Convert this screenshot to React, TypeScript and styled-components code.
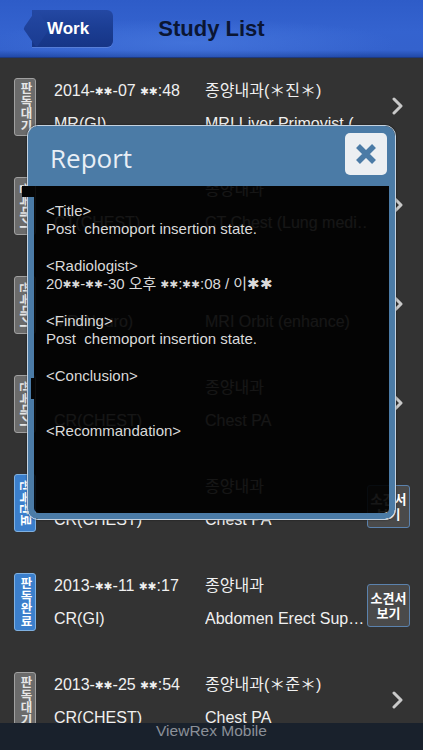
import styled, { createGlobalStyle } from 'styled-components';

const GlobalStyle = createGlobalStyle`
  html, body {
    margin: 0;
    padding: 0;
    background: #333333;
  }
  * {
    box-sizing: border-box;
  }
`;

const Screen = styled.div`
  position: relative;
  width: 423px;
  height: 750px;
  display: flex;
  flex-direction: column;
  background: #333333;
  overflow: hidden;
  font-family: "Liberation Sans", "Noto Sans CJK KR", Arial, sans-serif;
`;

const NavBar = styled.header`
  height: 58px;
  flex: none;
  display: grid;
  grid-template-columns: 1fr auto 1fr;
  align-items: center;
  background:
    radial-gradient(ellipse 70% 60% at 45% 75%, rgba(80, 130, 230, 0.5), rgba(80, 130, 230, 0) 70%),
    linear-gradient(#2e5cc8 0%, #3463cf 55%, #3462cd 88%, #2149a8 100%);
  border-bottom: 1px solid #1d3a80;
`;

const BackButton = styled.div`
  position: relative;
  justify-self: start;
  margin-left: 32px;
  width: 81px;
  height: 37px;
  display: flex;
  align-items: center;
  padding-left: 15px;
  border-radius: 0 6px 6px 0;
  background: linear-gradient(#2448a3, #1b3d93 50%, #163586);
  color: #ffffff;
  font-weight: bold;
  font-size: 17px;
  box-shadow: 0 1px 0 rgba(255, 255, 255, 0.15);

  &::before {
    content: '';
    position: absolute;
    left: -9.5px;
    top: 5px;
    width: 27px;
    height: 27px;
    border-radius: 3px;
    background: linear-gradient(135deg, #2448a3, #1a3b90);
    transform: scaleX(0.7) rotate(45deg);
  }

  span {
    position: relative;
  }
`;

const Title = styled.h1`
  margin: 0;
  font-size: 22px;
  font-weight: bold;
  color: #0b1633;
`;

const List = styled.div`
  flex: 1;
  overflow: hidden;
`;

const Row = styled.div`
  height: 99px;
  display: grid;
  grid-template-columns: 22px 169px 1fr 56px;
  padding-left: 14px;
`;

const Badge = styled.div<{ $done?: boolean; $sideways?: boolean }>`
  margin-top: 20px;
  width: 22px;
  height: 58px;
  overflow: hidden;
  display: flex;
  align-items: center;
  justify-content: center;
  border-radius: 3px;
  border: 1px solid ${({ $done }) => ($done ? '#7fb0e0' : '#a0a0a0')};
  background: ${({ $done }) => ($done ? '#3b7fcc' : '#6b6b6b')};
  color: ${({ $done }) => ($done ? '#ffffff' : '#e6e6e6')};
  font-size: 12.5px;
  font-weight: bold;
  line-height: 14px;
  writing-mode: vertical-rl;
  text-orientation: ${({ $sideways }) => ($sideways ? 'sideways' : 'upright')};
`;

const Cell = styled.div`
  display: flex;
  flex-direction: column;
  padding-top: 16px;
  min-width: 0;
`;

const DateCell = styled(Cell)`
  padding-left: 18px;
`;

const Line = styled.div`
  height: 33px;
  line-height: 33px;
  font-size: 16px;
  color: #f0f0f0;
  white-space: nowrap;
  overflow: hidden;
`;

const Star = styled.span`
  font-family: "DejaVu Sans", sans-serif;
  font-size: 10.5px;
  font-weight: bold;
  vertical-align: 1px;
`;

const Side = styled.div`
  position: relative;
`;

const Chevron = styled.svg`
  position: absolute;
  left: 25px;
  top: 39px;
`;

const ReportButton = styled.div`
  position: absolute;
  left: 0;
  top: 31px;
  width: 43px;
  height: 43px;
  display: flex;
  align-items: center;
  justify-content: center;
  text-align: center;
  border: 1.5px solid #5b82ad;
  border-radius: 3px;
  background: #4a4a4a;
  color: #ffffff;
  font-size: 13px;
  font-weight: bold;
  line-height: 15px;
`;

const Footer = styled.footer`
  height: 27px;
  flex: none;
  background: #19212c;
  color: #8b9098;
  font-size: 15.5px;
  line-height: 15px;
  text-align: center;
`;

const Modal = styled.div`
  position: absolute;
  left: 27px;
  top: 125px;
  width: 369px;
  height: 395px;
  display: flex;
  flex-direction: column;
  border: 1px solid #c4d2e0;
  border-radius: 11px;
  overflow: hidden;
  box-shadow: 0 0 2px rgba(0, 0, 0, 0.6);
`;

const ModalHead = styled.div`
  height: 60px;
  flex: none;
  display: flex;
  align-items: flex-start;
  justify-content: space-between;
  padding: 7px 8px 0 22px;
  background: #4b7ba6;
`;

const ModalTitle = styled.div`
  margin-top: 9px;
  font-family: "Open Sans", "DejaVu Sans", sans-serif;
  font-size: 26px;
  line-height: 32px;
  color: #e8eef5;
`;

const CloseButton = styled.div`
  width: 42px;
  height: 42px;
  display: flex;
  align-items: center;
  justify-content: center;
  border-radius: 5px;
  background: #eceff2;
`;

const BodyFrame = styled.div`
  flex: 1;
  display: flex;
  border: 6px solid #4b7ba6;
  border-top: none;
  border-radius: 0 0 10px 10px;
`;

const ModalBody = styled.div`
  flex: 1;
  padding: 16px 12px 0;
  border-radius: 0 0 5px 5px;
  background: rgba(0, 0, 0, 0.91);
  color: #dadada;
  font-size: 15px;
  line-height: 18.3px;
  white-space: pre-wrap;
`;

const Glitch = styled.div<{ $left: number; $top: number; $w: number; $h: number }>`
  position: absolute;
  left: ${({ $left }) => $left}px;
  top: ${({ $top }) => $top}px;
  width: ${({ $w }) => $w}px;
  height: ${({ $h }) => $h}px;
  background: #050505;
`;

// '*' in the data stands for a small masked digit
const Masked = ({ text }: { text: string }) => (
  <>
    {text.split(/(\*)/).map((part, i) =>
      part === '*' ? <Star key={i}>✱</Star> : part
    )}
  </>
);

type Study = {
  status: 'wait' | 'done';
  sideways?: boolean;
  date: string;
  dept: string;
  modality: string;
  name: string;
  report?: boolean;
};

const studies: Study[] = [
  { status: 'wait', date: '2014-**-07 **:48', dept: '종양내과(＊진＊)', modality: 'MR(GI)', name: 'MRI Liver Primovist (…' },
  { status: 'wait', sideways: true, date: '', dept: '종양내과', modality: 'CT(CHEST)', name: 'CT Chest (Lung medi…' },
  { status: 'wait', sideways: true, date: '', dept: '', modality: 'MR(Neuro)', name: 'MRI Orbit (enhance)' },
  { status: 'wait', sideways: true, date: '', dept: '종양내과', modality: 'CR(CHEST)', name: 'Chest PA' },
  { status: 'done', sideways: true, date: '', dept: '종양내과', modality: 'CR(CHEST)', name: 'Chest PA', report: true },
  { status: 'done', date: '2013-**-11 **:17', dept: '종양내과', modality: 'CR(GI)', name: 'Abdomen Erect  Sup…', report: true },
  { status: 'wait', date: '2013-**-25 **:54', dept: '종양내과(＊준＊)', modality: 'CR(CHEST)', name: 'Chest PA' },
];

const reportText = `<Title>
Post  chemoport insertion state.

<Radiologist>
20**-**-30 오후 **:**:08 / 이✱✱

<Finding>
Post  chemoport insertion state.

<Conclusion>


<Recommandation>`;

const App = () => {
  return (
    <>
      <GlobalStyle />
      <Screen>
        <NavBar>
          <BackButton>
            <span>Work</span>
          </BackButton>
          <Title>Study List</Title>
          <div />
        </NavBar>

        <List>
          {studies.map((s, i) => (
            <Row key={i}>
              <Badge $done={s.status === 'done'} $sideways={s.sideways}>
                {s.status === 'done' ? '판독완료' : '판독대기'}
              </Badge>
              <DateCell>
                <Line>
                  <Masked text={s.date} />
                </Line>
                <Line>{s.modality}</Line>
              </DateCell>
              <Cell>
                <Line>{s.dept}</Line>
                <Line>{s.name}</Line>
              </Cell>
              <Side>
                {s.report ? (
                  <ReportButton>
                    소견서
                    <br />
                    보기
                  </ReportButton>
                ) : (
                  <Chevron width="11" height="18" viewBox="0 0 11 18">
                    <path d="M2 2 L9 9 L2 16" fill="none" stroke="#c9c9c9" strokeWidth="3" strokeLinecap="round" strokeLinejoin="round" />
                  </Chevron>
                )}
              </Side>
            </Row>
          ))}
        </List>

        <Footer>ViewRex Mobile</Footer>

        <Modal>
          <ModalHead>
            <ModalTitle>Report</ModalTitle>
            <CloseButton>
              <svg width="24" height="24" viewBox="0 0 24 24">
                <path d="M4 4 L20 20 M20 4 L4 20" stroke="#4b7ba6" strokeWidth="5.5" />
              </svg>
            </CloseButton>
          </ModalHead>
          <BodyFrame>
            <ModalBody>
              <Masked text={reportText} />
            </ModalBody>
          </BodyFrame>
        </Modal>
        <Glitch $left={22} $top={186} $w={13} $h={11} />
        <Glitch $left={31} $top={378} $w={4} $h={21} />
      </Screen>
    </>
  );
};

export default App;
